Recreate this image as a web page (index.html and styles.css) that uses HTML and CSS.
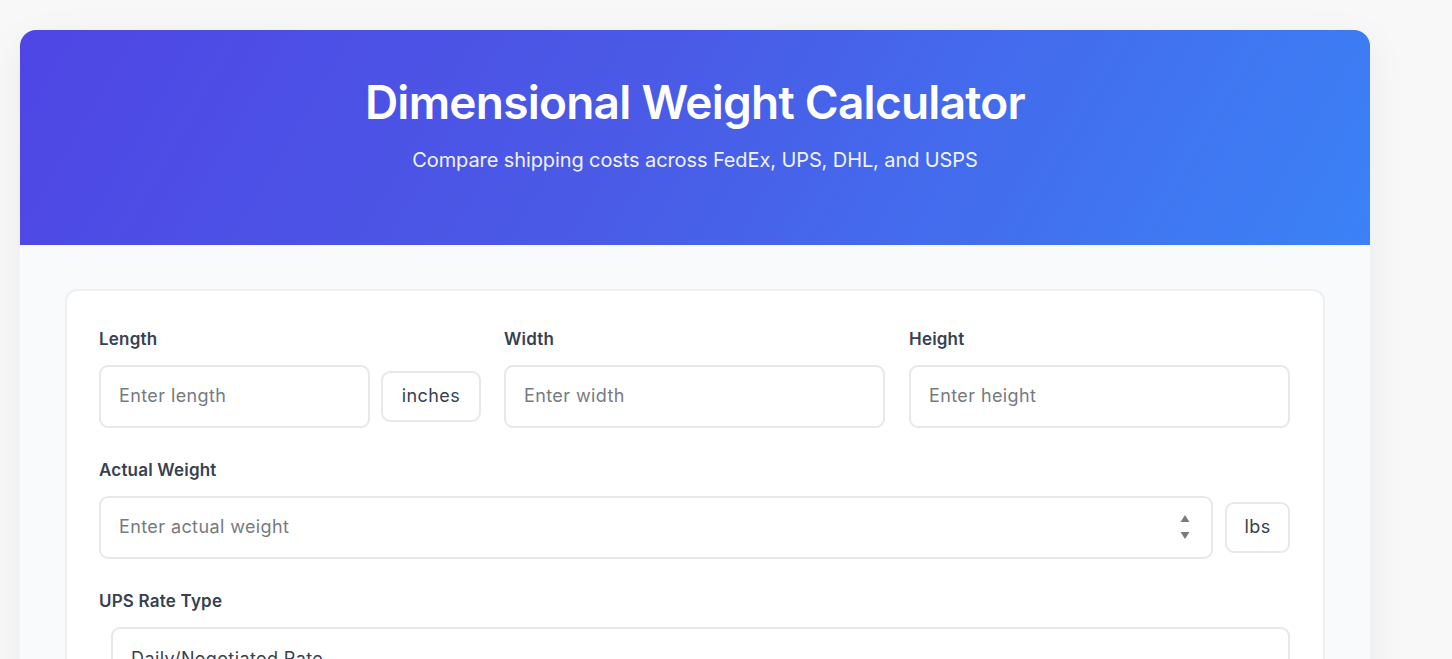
FILE: index.html
```html
<!DOCTYPE html>
<html lang="en">
<head>
<meta charset="utf-8">
<title>Dimensional Weight Calculator</title>
<link rel="stylesheet" href="styles.css">
</head>
<body>
<div class="app">
  <header class="hero">
    <h1 class="hero-title">Dimensional Weight Calculator</h1>
    <p class="hero-sub">Compare shipping costs across FedEx, UPS, DHL, and USPS</p>
  </header>
  <main class="content">
    <section class="form-card">
      <div class="dims">
        <div class="field">
          <label class="label" for="len">Length</label>
          <div class="with-unit">
            <input class="input" id="len" type="text" placeholder="Enter length">
            <span class="unit unit-inches">inches</span>
          </div>
        </div>
        <div class="field">
          <label class="label" for="wid">Width</label>
          <input class="input" id="wid" type="text" placeholder="Enter width">
        </div>
        <div class="field">
          <label class="label" for="hei">Height</label>
          <input class="input" id="hei" type="text" placeholder="Enter height">
        </div>
      </div>
      <div class="field">
        <label class="label" for="wt">Actual Weight</label>
        <div class="with-unit">
          <div class="num-wrap">
            <input class="input" id="wt" type="text" placeholder="Enter actual weight">
            <svg class="spinner" width="10" height="26" viewBox="0 0 10 26" aria-hidden="true">
              <path d="M5 1 L9.5 8 L0.5 8 Z" fill="#7b7b7b"/>
              <path d="M0.5 18 L9.5 18 L5 25 Z" fill="#7b7b7b"/>
            </svg>
          </div>
          <span class="unit unit-lbs">lbs</span>
        </div>
      </div>
      <div class="field">
        <label class="label" for="ups">UPS Rate Type</label>
        <div class="select select-ups" id="ups">Daily/Negotiated Rate</div>
      </div>
    </section>
  </main>
</div>
</body>
</html>
```

FILE: styles.css
```css
* { box-sizing: border-box; }

html, body {
  margin: 0;
  padding: 0;
}

body {
  background: #f8f8f8;
  font-family: "Inter", "Open Sans", sans-serif;
  color: #374151;
  overflow: hidden;
}

.app {
  width: 1350px;
  margin: 30px 0 0 20px;
  border-radius: 16px 16px 0 0;
  background: #f8fafc;
  box-shadow: 0 10px 40px rgba(0, 0, 0, 0.06);
}

.hero {
  background: linear-gradient(120deg, #4f46e5 0%, #4a5ae6 45%, #3b82f6 100%);
  border-radius: 16px 16px 0 0;
  color: #ffffff;
  text-align: center;
  padding: 43px 20px 71px;
}

.hero-title {
  margin: 0;
  font-size: 46px;
  line-height: 58px;
  font-weight: 600;
  letter-spacing: -0.75px;
}

.hero-sub {
  margin: 16px 0 0;
  font-size: 20px;
  line-height: 27px;
  font-weight: 400;
  opacity: 0.92;
  letter-spacing: -0.1px;
}

.content {
  padding: 44px 45px 40px;
}

.form-card {
  background: #ffffff;
  border: 2px solid #edeff2;
  border-radius: 12px;
  padding: 36px 33px 32px 32px;
  display: flex;
  flex-direction: column;
  gap: 30px;
}

.dims {
  display: grid;
  grid-template-columns: repeat(3, 1fr);
  gap: 24px;
}

.field {
  display: flex;
  flex-direction: column;
}

.label {
  font-size: 17px;
  line-height: 24px;
  font-weight: 600;
  color: #374151;
  margin-bottom: 14px;
  letter-spacing: 0.2px;
}

.with-unit {
  display: flex;
  align-items: center;
  gap: 11px;
}

.input {
  flex: 1;
  min-width: 0;
  width: 100%;
  height: 63px;
  border: 2px solid #e8e8ea;
  border-radius: 9px;
  padding: 0 18px 2px;
  font-family: inherit;
  font-size: 18px;
  letter-spacing: 0.4px;
  color: #374151;
  background: #ffffff;
  outline: none;
}

.input::placeholder {
  color: #777a80;
}

.unit {
  flex: none;
  height: 51px;
  display: flex;
  align-items: center;
  justify-content: center;
  border: 2px solid #e8e8ea;
  border-radius: 9px;
  font-size: 18px;
  letter-spacing: 0.4px;
  color: #374151;
  background: #ffffff;
  padding-bottom: 2px;
}

.unit-inches { width: 100px; margin-right: -1px; }
.unit-lbs { width: 65px; margin-left: 1px; }

.num-wrap {
  position: relative;
  flex: 1;
  display: flex;
}

.spinner {
  position: absolute;
  right: 23px;
  top: 18px;
}

.select {
  height: 63px;
  margin-left: 12px;
  border: 2px solid #e8e8ea;
  border-radius: 9px;
  padding: 0 18px;
  display: flex;
  align-items: center;
  font-size: 18px;
  letter-spacing: 0.4px;
  color: #374151;
  background: #ffffff;
}
```
